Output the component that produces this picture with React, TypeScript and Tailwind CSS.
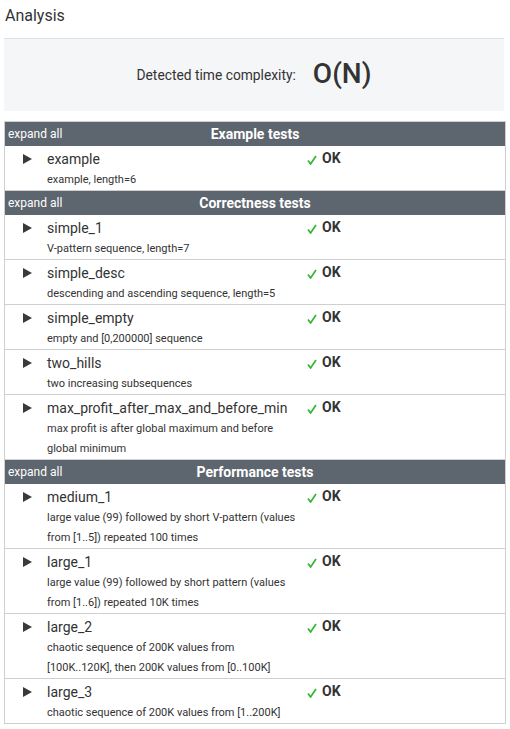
import React from 'react'

type Test = { name: string; desc: string }
type Group = { title: string; tests: Test[] }

const groups: Group[] = [
  {
    title: 'Example tests',
    tests: [{ name: 'example', desc: 'example, length=6' }],
  },
  {
    title: 'Correctness tests',
    tests: [
      { name: 'simple_1', desc: 'V-pattern sequence, length=7' },
      { name: 'simple_desc', desc: 'descending and ascending sequence, length=5' },
      { name: 'simple_empty', desc: 'empty and [0,200000] sequence' },
      { name: 'two_hills', desc: 'two increasing subsequences' },
      {
        name: 'max_profit_after_max_and_before_min',
        desc: 'max profit is after global maximum and before global minimum',
      },
    ],
  },
  {
    title: 'Performance tests',
    tests: [
      { name: 'medium_1', desc: 'large value (99) followed by short V-pattern (values from [1..5]) repeated 100 times' },
      { name: 'large_1', desc: 'large value (99) followed by short pattern (values from [1..6]) repeated 10K times' },
      { name: 'large_2', desc: 'chaotic sequence of 200K values from [100K..120K], then 200K values from [0..100K]' },
      { name: 'large_3', desc: 'chaotic sequence of 200K values from [1..200K]' },
    ],
  },
]

// ── Header bar for each group ─────────────────────────────────────────────────

const GroupHeader = ({ title }: { title: string }) => (
  <div className="grid grid-cols-[1fr_auto_1fr] items-center h-[24px] bg-[#5d656e] text-white">
    <span className="pl-[3px] text-[12px] leading-none">expand all</span>
    <span className="text-[14px] font-bold leading-none">{title}</span>
    <span />
  </div>
)

// ── One test row ──────────────────────────────────────────────────────────────

const TestRow = ({ test }: { test: Test }) => (
  <div className="grid grid-cols-[42px_253px_1fr] border-b border-[#cfcfcf] bg-white">
    <div className="flex justify-center pt-[8px] pl-[2px]">
      <svg width="9" height="10" viewBox="0 0 9 10">
        <polygon points="0,0 9,5 0,10" fill="#3a3a3a" />
      </svg>
    </div>
    <div className="pt-[2px]">
      <div className="text-[14px] leading-[22px] text-[#333]">{test.name}</div>
      <div className="text-[11px] leading-[20px] text-[#333]">{test.desc}</div>
    </div>
    <div className="flex items-start pt-[1px] pl-[7px] leading-[22px]">
      <svg width="10" height="10" viewBox="0 0 10 10" className="mt-[8px] mr-[5px]">
        <polyline points="1,5.5 3.6,9 9,1" fill="none" stroke="#34b534" strokeWidth="1.7" />
      </svg>
      <span className="text-[14px] font-bold text-[#333]">OK</span>
    </div>
  </div>
)

export default function App() {
  return (
    <div className="min-h-[729px] bg-white px-[4px] pb-[6px] font-['Roboto',sans-serif] text-[#333]">
      <h1 className="pl-[1px] pt-[5px] text-[16px] leading-[22px] font-normal">Analysis</h1>

      <div className="mt-[11px] mr-[2px] h-[73px] flex items-center justify-center gap-[17px] bg-[#f5f6f8] border-t border-[#dfe1e5]">
        <span className="text-[13.8px]">Detected time complexity:</span>
        <span className="text-[28px] font-medium leading-none pb-[2px]">O(N)</span>
      </div>

      <div className="mt-[10px] border border-[#cfcfcf] border-b-0">
        {groups.map((g) => (
          <div key={g.title}>
            <GroupHeader title={g.title} />
            {g.tests.map((t) => (
              <TestRow key={t.name} test={t} />
            ))}
          </div>
        ))}
      </div>
    </div>
  )
}
